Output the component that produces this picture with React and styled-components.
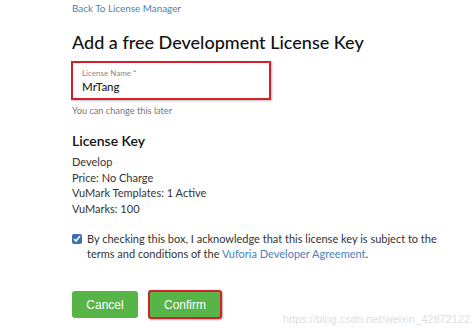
import React from "react";
import styled, { createGlobalStyle } from "styled-components";

const GlobalStyle = createGlobalStyle`
  html, body {
    margin: 0;
    padding: 0;
    background: #ffffff;
  }
  body {
    font-family: Lato, "Liberation Sans", sans-serif;
    color: #222;
  }
`;

const App = () => {
  return (
    <>
      <GlobalStyle />
      <Page>
        <BackLink href="#">Back To License Manager</BackLink>
        <Title>Add a free Development License Key</Title>

        <NameField>
          <FieldLabel>License Name *</FieldLabel>
          <FieldValue>MrTang</FieldValue>
        </NameField>
        <Hint>You can change this later</Hint>

        <SectionTitle>License Key</SectionTitle>
        <Details>
          <Detail>Develop</Detail>
          <Detail>Price: No Charge</Detail>
          <Detail>VuMark Templates: 1 Active</Detail>
          <Detail>VuMarks: 100</Detail>
        </Details>

        <Agreement>
          <Check type="checkbox" defaultChecked />
          <AgreementText>
            By checking this box, I acknowledge that this license key is subject to the
            terms and conditions of the <Link href="#">Vuforia Developer Agreement</Link>.
          </AgreementText>
        </Agreement>

        <Buttons>
          <Button>Cancel</Button>
          <Button highlighted>Confirm</Button>
        </Buttons>
      </Page>
      <Watermark>https://blog.csdn.net/weixin_42872122</Watermark>
    </>
  );
};

export default App;

const Page = styled.div`
  width: 474px;
  height: 333px;
  box-sizing: border-box;
  padding: 2px 0 0 72px;
  display: flex;
  flex-direction: column;
  align-items: flex-start;
  overflow: hidden;
`;

const BackLink = styled.a`
  font-size: 9.9px;
  line-height: 12px;
  color: #4a7fb8;
  text-decoration: none;
`;

const Title = styled.h1`
  margin: 17px 0 0;
  font-size: 18px;
  line-height: 22px;
  font-weight: 500;
  color: #111;
`;

const NameField = styled.div`
  margin: 8px 0 0 -1px;
  width: 200px;
  height: 39px;
  box-sizing: border-box;
  border: 2px solid #d3202a;
  box-shadow: 1px 1px 2px rgba(0, 0, 0, 0.25);
  padding: 5px 0 0 9px;
  display: flex;
  flex-direction: column;
`;

const FieldLabel = styled.span`
  font-size: 8px;
  line-height: 11px;
  color: #888;
`;

const FieldValue = styled.span`
  font-size: 11.5px;
  line-height: 15px;
  color: #222;
  font-weight: 500;
`;

const Hint = styled.div`
  margin-top: 5px;
  font-size: 9.2px;
  line-height: 12px;
  color: #777;
`;

const SectionTitle = styled.h2`
  margin: 15px 0 0;
  font-size: 14px;
  line-height: 18px;
  font-weight: 600;
  color: #111;
`;

const Details = styled.div`
  margin-top: 4px;
  display: flex;
  flex-direction: column;
`;

const Detail = styled.div`
  font-size: 11px;
  line-height: 15.5px;
  color: #333;
`;

const Agreement = styled.label`
  margin-top: 15px;
  display: flex;
  align-items: flex-start;
  gap: 5px;
`;

const Check = styled.input`
  margin: 3px 0 0;
  width: 10px;
  height: 10px;
  accent-color: #3a6fb5;
`;

const AgreementText = styled.p`
  margin: 0;
  width: 360px;
  font-size: 11px;
  line-height: 15px;
  color: #333;
`;

const Link = styled.a`
  color: #4a7fb8;
  text-decoration: none;
`;

const Buttons = styled.div`
  margin-top: 29px;
  display: flex;
  gap: 10px;
  align-items: center;
`;

const Button = styled.button`
  width: ${(p) => (p.highlighted ? "74px" : "66px")};
  height: ${(p) => (p.highlighted ? "29px" : "27px")};
  box-sizing: border-box;
  border: ${(p) => (p.highlighted ? "2px solid #d3202a" : "none")};
  box-shadow: ${(p) => (p.highlighted ? "1px 1px 2px rgba(0,0,0,0.3)" : "none")};
  border-radius: 3px;
  background: #56b546;
  color: #fff;
  font-family: "Liberation Sans", sans-serif;
  font-size: 12px;
  cursor: pointer;
`;

const Watermark = styled.div`
  position: absolute;
  left: 283px;
  top: 313px;
  font-family: "Liberation Sans", sans-serif;
  font-size: 11px;
  color: rgba(200, 200, 200, 0.6);
`;
